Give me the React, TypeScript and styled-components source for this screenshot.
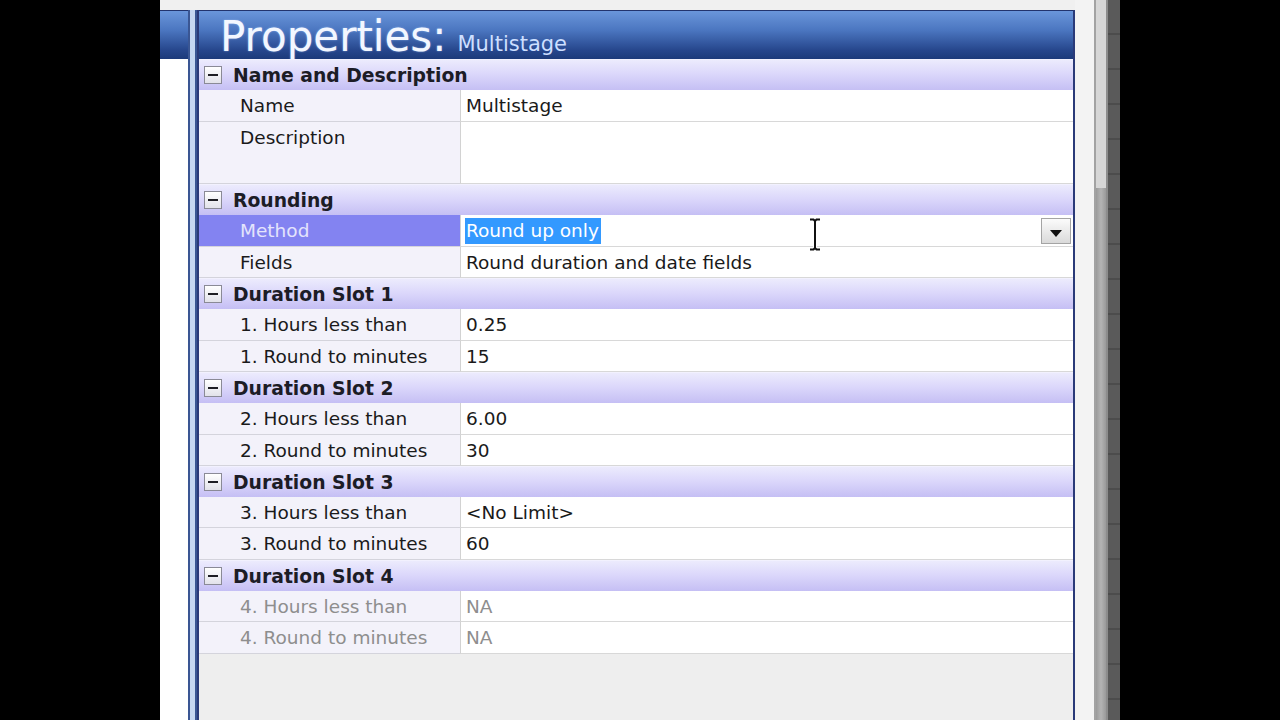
import styled, { createGlobalStyle } from "styled-components";

const GlobalStyle = createGlobalStyle`
  html, body {
    margin: 0;
    padding: 0;
    background: #000;
  }
  body {
    font-family: "DejaVu Sans", "Liberation Sans", sans-serif;
  }
`;

const ROW = 31.3;

type Prop = {
  label: string;
  value: string;
  tall?: boolean;
  selected?: boolean;
  disabled?: boolean;
};

type Group = { title: string; items: Prop[] };

const groups: Group[] = [
  {
    title: "Name and Description",
    items: [
      { label: "Name", value: "Multistage" },
      { label: "Description", value: "", tall: true },
    ],
  },
  {
    title: "Rounding",
    items: [
      { label: "Method", value: "Round up only", selected: true },
      { label: "Fields", value: "Round duration and date fields" },
    ],
  },
  {
    title: "Duration Slot 1",
    items: [
      { label: "1. Hours less than", value: "0.25" },
      { label: "1. Round to minutes", value: "15" },
    ],
  },
  {
    title: "Duration Slot 2",
    items: [
      { label: "2. Hours less than", value: "6.00" },
      { label: "2. Round to minutes", value: "30" },
    ],
  },
  {
    title: "Duration Slot 3",
    items: [
      { label: "3. Hours less than", value: "<No Limit>" },
      { label: "3. Round to minutes", value: "60" },
    ],
  },
  {
    title: "Duration Slot 4",
    items: [
      { label: "4. Hours less than", value: "NA", disabled: true },
      { label: "4. Round to minutes", value: "NA", disabled: true },
    ],
  },
];

const IBEAM =
  "M2 1.5 H5.5 L7 3 L8.5 1.5 H12 M7 3 V30 M2 31.5 H5.5 L7 30 L8.5 31.5 H12";

const App = () => {
  return (
    <>
      <GlobalStyle />
      <Screen>
        <Frame>
          <SidePanel>
            <BlueBand />
            <SideBody />
          </SidePanel>
          <Splitter />
          <Panel>
            <PanelHeader>
              <Title>Properties:</Title>
              <Subtitle>Multistage</Subtitle>
            </PanelHeader>
            <Grid>
              {groups.map((g) => (
                <div key={g.title}>
                  <GroupRow>
                    <ToggleBox>
                      <Dash />
                    </ToggleBox>
                    <GroupLabel>{g.title}</GroupLabel>
                  </GroupRow>
                  {g.items.map((it) => (
                    <PropRow key={it.label} $tall={it.tall}>
                      <LabelCell $selected={it.selected} $disabled={it.disabled}>
                        {it.label}
                      </LabelCell>
                      <ValueCell $disabled={it.disabled}>
                        {it.selected ? (
                          <>
                            <Selection>{it.value}</Selection>
                            <DropButton>
                              <svg width="12" height="7" viewBox="0 0 12 7">
                                <path d="M0 0 L12 0 L6 7 Z" fill="#111" />
                              </svg>
                            </DropButton>
                            <Cursor>
                              <svg width="14" height="33" viewBox="0 0 14 33">
                                <path d={IBEAM} stroke="#fff" strokeWidth="4" fill="none" />
                                <path d={IBEAM} stroke="#111" strokeWidth="2" fill="none" />
                              </svg>
                            </Cursor>
                          </>
                        ) : (
                          it.value
                        )}
                      </ValueCell>
                    </PropRow>
                  ))}
                </div>
              ))}
            </Grid>
            <PanelFill />
          </Panel>
          <Gutter />
          <ScrollTrack>
            <Thumb />
          </ScrollTrack>
          <DarkEdge />
        </Frame>
      </Screen>
    </>
  );
};

const Screen = styled.div`
  width: 1280px;
  height: 720px;
  background: #000;
  display: flex;
  justify-content: center;
  overflow: hidden;
`;

const Frame = styled.div`
  width: 960px;
  height: 720px;
  display: flex;
  background: #f0f0f0;
`;

const SidePanel = styled.div`
  width: 28px;
  padding-top: 10px;
  display: flex;
  flex-direction: column;
`;

const BlueBand = styled.div`
  height: 49px;
  border-top: 1px solid #22346e;
  box-sizing: border-box;
  background: linear-gradient(to bottom, #6a96db 0%, #4b76c0 40%, #26468c 82%, #1c3a7a 100%);
`;

const SideBody = styled.div`
  flex: 1;
  background: #fff;
`;

const Splitter = styled.div`
  width: 5px;
  margin-top: 10px;
  background: #c6d7f1;
  border-left: 2px solid #3a5693;
  border-right: 2px solid #3a5693;
`;

const Panel = styled.div`
  width: 874px;
  margin-top: 10px;
  display: flex;
  flex-direction: column;
  background: #eeeeee;
  border-left: 2px solid #2a3a78;
  border-right: 2px solid #2a3a78;
`;

const PanelHeader = styled(BlueBand)`
  display: flex;
  align-items: baseline;
  padding-left: 21px;
  gap: 11px;
`;

const Title = styled.span`
  font-size: 42px;
  line-height: 48px;
  padding-top: 2px;
  color: #f3f7ff;
  text-shadow: 0 0 2px rgba(180, 210, 255, 0.6);
`;

const Subtitle = styled.span`
  font-size: 21px;
  color: #cddfff;
`;

const Grid = styled.div`
  display: flex;
  flex-direction: column;
  background: #fff;
`;

const GroupRow = styled.div`
  height: ${ROW}px;
  box-sizing: border-box;
  display: flex;
  align-items: center;
  background: linear-gradient(to bottom, #ecebfd 0%, #dcd8fb 45%, #c5bff4 100%);
  border-top: 1px solid #f2f1fe;
`;

const ToggleBox = styled.div`
  width: 18px;
  height: 18px;
  box-sizing: border-box;
  margin-left: 5px;
  border: 1px solid #8a8a96;
  background: linear-gradient(to bottom, #ffffff, #e2e2ea);
  display: flex;
  align-items: center;
  justify-content: center;
`;

const Dash = styled.div`
  width: 10px;
  height: 2px;
  background: #1e1e24;
`;

const GroupLabel = styled.span`
  margin-left: 11px;
  padding-top: 1px;
  font-size: 18.8px;
  font-weight: bold;
  color: #1c1c26;
`;

const PropRow = styled.div<{ $tall?: boolean }>`
  height: ${(p) => (p.$tall ? ROW * 2 : ROW)}px;
  display: grid;
  grid-template-columns: 261px 1fr;
  font-size: 18.5px;
  line-height: ${ROW - 2}px;
`;

const LabelCell = styled.div<{ $selected?: boolean; $disabled?: boolean }>`
  box-sizing: border-box;
  padding-left: 41px;
  padding-top: 1px;
  border-bottom: 1px solid #d4d4dc;
  background: ${(p) => (p.$selected ? "#8383f1" : "#f3f2fa")};
  color: ${(p) => (p.$selected ? "#e4e4fc" : p.$disabled ? "#8e8e8e" : "#1a1a1a")};
  white-space: nowrap;
`;

const ValueCell = styled.div<{ $disabled?: boolean }>`
  position: relative;
  box-sizing: border-box;
  display: flex;
  align-items: flex-start;
  padding-left: 5px;
  padding-top: 1px;
  border-left: 1px solid #d2d2d2;
  border-bottom: 1px solid #d8d8d8;
  background: #fff;
  color: ${(p) => (p.$disabled ? "#8e8e8e" : "#1a1a1a")};
  white-space: nowrap;
`;

const Selection = styled.span`
  margin-top: 2px;
  margin-left: -1px;
  padding: 0 2px 0 1px;
  line-height: 26px;
  background: #3399ff;
  color: #fff;
`;

const DropButton = styled.div`
  margin-left: auto;
  margin-right: 2px;
  margin-top: 2px;
  width: 30px;
  height: 26px;
  box-sizing: border-box;
  border: 1px solid #a4a4a4;
  background: linear-gradient(to bottom, #fbfbfb, #dadada);
  display: flex;
  align-items: center;
  justify-content: center;
  padding-top: 4px;
`;

const Cursor = styled.div`
  position: absolute;
  z-index: 2;
  left: 347px;
  top: 3px;
  line-height: 0;

  svg {
    display: block;
  }
`;

const PanelFill = styled.div`
  flex: 1;
  background: #eeeeee;
`;

const Gutter = styled.div`
  width: 19px;
  background: #f3f3f3;
`;

const ScrollTrack = styled.div`
  width: 10px;
  display: flex;
  flex-direction: column;
  background: #d6d6d6;
  border-left: 2px solid #a2a2a2;
  border-right: 2px solid #8c8c8c;
`;

const Thumb = styled.div`
  margin-top: 188px;
  flex: 1;
  background: linear-gradient(to right, #9a9a9a, #b4b4b4, #9a9a9a);
`;

const DarkEdge = styled.div`
  flex: 1;
  background: repeating-linear-gradient(
    to bottom,
    #5a5a5a 0px,
    #5a5a5a 33px,
    #4c4c4c 33px,
    #4c4c4c 35px
  );
`;

export default App;
